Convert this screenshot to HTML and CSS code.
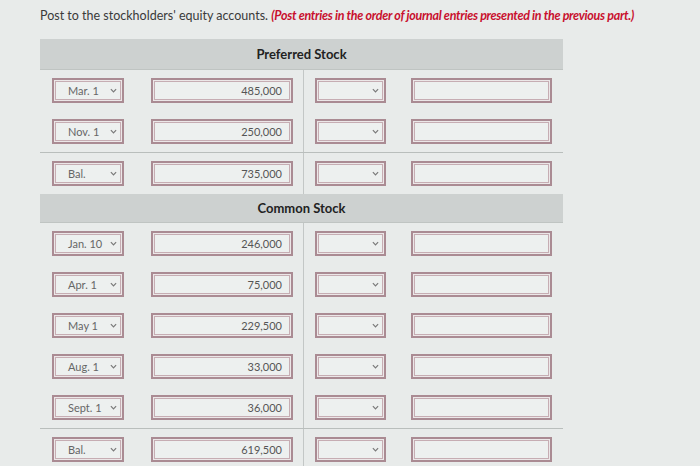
FILE: index.html
```html
<!DOCTYPE html>
<html>
<head>
<meta charset="utf-8">
<link rel="stylesheet" href="styles.css">
</head>
<body>
<div class="page">
  <p class="title">Post to the stockholders' equity accounts. <em>(Post entries in the order of journal entries presented in the previous part.)</em></p>

  <div class="ledger">
    <div class="acct-head">Preferred Stock</div>
    <div class="row">
      <div class="half left"><div class="sel"><span>Mar. 1</span><svg class="chev" viewBox="0 0 8 5"><path d="M1 1l3 3 3-3"/></svg></div><div class="inp">485,000</div></div>
      <div class="half right"><div class="sel"><span></span><svg class="chev" viewBox="0 0 8 5"><path d="M1 1l3 3 3-3"/></svg></div><div class="inp"></div></div>
    </div>
    <div class="row">
      <div class="half left"><div class="sel"><span>Nov. 1</span><svg class="chev" viewBox="0 0 8 5"><path d="M1 1l3 3 3-3"/></svg></div><div class="inp">250,000</div></div>
      <div class="half right"><div class="sel"><span></span><svg class="chev" viewBox="0 0 8 5"><path d="M1 1l3 3 3-3"/></svg></div><div class="inp"></div></div>
    </div>
    <div class="row sep">
      <div class="half left"><div class="sel"><span>Bal.</span><svg class="chev" viewBox="0 0 8 5"><path d="M1 1l3 3 3-3"/></svg></div><div class="inp">735,000</div></div>
      <div class="half right"><div class="sel"><span></span><svg class="chev" viewBox="0 0 8 5"><path d="M1 1l3 3 3-3"/></svg></div><div class="inp"></div></div>
    </div>

    <div class="acct-head second">Common Stock</div>
    <div class="row">
      <div class="half left"><div class="sel"><span>Jan. 10</span><svg class="chev" viewBox="0 0 8 5"><path d="M1 1l3 3 3-3"/></svg></div><div class="inp">246,000</div></div>
      <div class="half right"><div class="sel"><span></span><svg class="chev" viewBox="0 0 8 5"><path d="M1 1l3 3 3-3"/></svg></div><div class="inp"></div></div>
    </div>
    <div class="row">
      <div class="half left"><div class="sel"><span>Apr. 1</span><svg class="chev" viewBox="0 0 8 5"><path d="M1 1l3 3 3-3"/></svg></div><div class="inp">75,000</div></div>
      <div class="half right"><div class="sel"><span></span><svg class="chev" viewBox="0 0 8 5"><path d="M1 1l3 3 3-3"/></svg></div><div class="inp"></div></div>
    </div>
    <div class="row">
      <div class="half left"><div class="sel"><span>May 1</span><svg class="chev" viewBox="0 0 8 5"><path d="M1 1l3 3 3-3"/></svg></div><div class="inp">229,500</div></div>
      <div class="half right"><div class="sel"><span></span><svg class="chev" viewBox="0 0 8 5"><path d="M1 1l3 3 3-3"/></svg></div><div class="inp"></div></div>
    </div>
    <div class="row">
      <div class="half left"><div class="sel"><span>Aug. 1</span><svg class="chev" viewBox="0 0 8 5"><path d="M1 1l3 3 3-3"/></svg></div><div class="inp">33,000</div></div>
      <div class="half right"><div class="sel"><span></span><svg class="chev" viewBox="0 0 8 5"><path d="M1 1l3 3 3-3"/></svg></div><div class="inp"></div></div>
    </div>
    <div class="row">
      <div class="half left"><div class="sel"><span>Sept. 1</span><svg class="chev" viewBox="0 0 8 5"><path d="M1 1l3 3 3-3"/></svg></div><div class="inp">36,000</div></div>
      <div class="half right"><div class="sel"><span></span><svg class="chev" viewBox="0 0 8 5"><path d="M1 1l3 3 3-3"/></svg></div><div class="inp"></div></div>
    </div>
    <div class="row sep">
      <div class="half left"><div class="sel"><span>Bal.</span><svg class="chev" viewBox="0 0 8 5"><path d="M1 1l3 3 3-3"/></svg></div><div class="inp">619,500</div></div>
      <div class="half right"><div class="sel"><span></span><svg class="chev" viewBox="0 0 8 5"><path d="M1 1l3 3 3-3"/></svg></div><div class="inp"></div></div>
    </div>
  </div>
</div>
</body>
</html>
```

FILE: styles.css
```css
html, body {
  margin: 0;
  padding: 0;
  background: #e8ebea;
  height: 100%;
  overflow: hidden;
}
.page {
  padding: 8px 0 0 40px;
  font-family: Lato, "Liberation Sans", sans-serif;
  color: #333;
}
.title {
  margin: 0 0 16px 0;
  font-size: 12.5px;
  line-height: 15px;
  color: #3a3a3a;
  white-space: nowrap;
}
.title em {
  color: #c8102e;
  font-weight: bold;
  font-style: italic;
  letter-spacing: -0.3px;
}
.ledger {
  width: 523px;
}
.acct-head {
  height: 30px;
  background: #cdd1d0;
  border-bottom: 1px solid #bfc4c2;
  display: flex;
  align-items: center;
  justify-content: center;
  font-weight: bold;
  font-size: 13px;
  color: #222;
}
.acct-head.second {
  height: 28px;
}
.row {
  display: grid;
  grid-template-columns: 264px 259px;
}
.row.sep {
  border-top: 1px solid #b9bebc;
}
.half {
  display: flex;
  align-items: center;
  padding: 8px 0;
}
.half.left {
  padding-left: 12px;
  gap: 27px;
  border-right: 1px solid #c3c7c6;
}
.half.right {
  padding-left: 11px;
  gap: 25px;
}
.sel, .inp {
  box-sizing: border-box;
  height: 25px;
  border: 2px solid #aa8b93;
  box-shadow: inset 0 0 0 1px #ece7e8, inset 0 0 0 2px #c6adb3;
  background: #edf0ef;
  font-size: 11px;
  color: #666;
  display: flex;
  align-items: center;
}
.sel {
  width: 72px;
  padding: 0 5px 0 14px;
  justify-content: space-between;
}
.right .sel {
  width: 71px;
}
.inp {
  width: 142px;
  justify-content: flex-end;
  padding-right: 9px;
  color: #555;
}
.right .inp {
  width: 141px;
}
.chev {
  width: 7px;
  height: 5px;
  fill: none;
  stroke: #7a7a7a;
  stroke-width: 1.4;
}
```
